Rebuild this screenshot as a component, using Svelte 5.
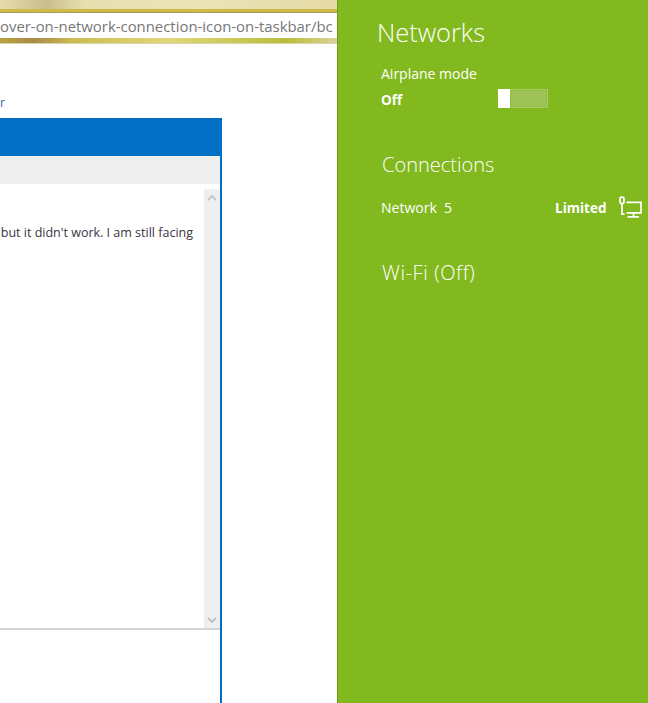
<script>
  const bodyText = "but it didn't work. I am still facing";
</script>

<div class="screen">
  <div class="browser">
    <div class="chrome-top"></div>
    <div class="address">
      <span class="url">over-on-network-connection-icon-on-taskbar/bc</span>
    </div>
    <div class="chrome-bottom"></div>
    <div class="page">
      <div class="crumb">r</div>
      <div class="dialog">
        <div class="dialog-head"></div>
        <div class="dialog-tabs"></div>
        <div class="dialog-body">
          <div class="message">
            <p>{bodyText}</p>
          </div>
          <div class="scrollbar">
            <svg width="10" height="6" viewBox="0 0 10 6"><path d="M1 5 L5 1 L9 5" fill="none" stroke="#c8c8c8" stroke-width="2" /></svg>
            <svg width="10" height="6" viewBox="0 0 10 6"><path d="M1 1 L5 5 L9 1" fill="none" stroke="#c0c0c0" stroke-width="2" /></svg>
          </div>
        </div>
        <div class="dialog-foot"></div>
      </div>
    </div>
  </div>

  <aside class="panel">
    <h1>Networks</h1>
    <div class="airplane">
      <div class="airplane-label">Airplane mode</div>
      <div class="airplane-row">
        <span class="state">Off</span>
        <div class="toggle"><div class="thumb"></div><div class="track"></div></div>
      </div>
    </div>
    <h2 class="connections">Connections</h2>
    <div class="network">
      <span class="network-name">Network&nbsp; 5</span>
      <span class="limited">Limited</span>
      <svg class="net-icon" width="24" height="23" viewBox="0 0 24 23" fill="none" stroke="#fff" stroke-width="1.7">
        <rect x="2" y="1.2" width="4" height="6.4" rx="1.8" />
        <path d="M4 7.6 V18.2 H6.5" />
        <path d="M8.5 6.4 H23 V16.8 H8.5" />
        <path d="M15.5 16.8 V20.6 M9.5 20.8 H21" />
      </svg>
    </div>
    <h2 class="wifi">Wi-Fi (Off)</h2>
  </aside>
</div>

<style>
  :global(body) {
    margin: 0;
    background: #fff;
  }

  .screen {
    display: flex;
    width: 648px;
    height: 703px;
    overflow: hidden;
    font-family: "Open Sans", "Noto Sans", sans-serif;
  }

  .browser {
    width: 337px;
    flex-shrink: 0;
    display: flex;
    flex-direction: column;
    overflow: hidden;
  }

  .chrome-top {
    height: 13px;
    box-sizing: border-box;
    background: linear-gradient(90deg, #e6dcaa 0%, #c9bd8c 14%, #e8dfb0 25%, #ebe2b8 60%, #e4dba6 100%);
    border-bottom: 1px solid #a39a64;
    box-shadow: inset 0 -3px 0 #cdbb45;
  }

  .address {
    height: 25px;
    background: #fff;
    overflow: hidden;
    white-space: nowrap;
    line-height: 26px;
  }

  .url {
    display: block;
    font-size: 14.9px;
    color: #777;
  }

  .chrome-bottom {
    height: 6px;
    background: linear-gradient(90deg, #b9a23e 0%, #a88a4a 10%, #cdbd50 22%, #e0d77a 50%, #b9bd3c 85%, #d9d49a 100%);
    border-bottom: 1px solid #d8d4ae;
    box-sizing: border-box;
  }

  .page {
    flex: 1;
    display: flex;
    flex-direction: column;
    min-height: 0;
  }

  .crumb {
    height: 74px;
    box-sizing: border-box;
    padding-top: 51px;
    font-size: 12px;
    line-height: 16px;
    color: #2462ac;
  }

  .dialog {
    width: 222px;
    flex: 1;
    box-sizing: border-box;
    border-right: 2px solid #0170c4;
    display: flex;
    flex-direction: column;
  }

  .dialog-head {
    height: 38px;
    margin-right: -2px;
    background: #0170c4;
  }

  .dialog-tabs {
    height: 28px;
    background: #eeeeee;
  }

  .dialog-body {
    height: 446px;
    box-sizing: border-box;
    display: flex;
    justify-content: flex-end;
    padding-top: 5px;
    border-bottom: 2px solid #d4d4d4;
  }

  .message {
    flex: 1;
    min-width: 0;
    overflow: hidden;
    padding-top: 35px;
  }

  .message p {
    margin: 0 11px 0 0;
    text-align: right;
    white-space: nowrap;
    font-size: 12.5px;
    line-height: 18px;
    color: #3b3344;
  }

  .scrollbar {
    width: 16px;
    background: #efefef;
    display: flex;
    flex-direction: column;
    align-items: center;
    justify-content: space-between;
    padding: 6px 0 5px;
    box-sizing: border-box;
  }

  .dialog-foot {
    flex: 1;
  }

  .panel {
    flex: 1;
    box-sizing: border-box;
    background: #82b91e;
    border-left: 1px solid #6f9b1e;
    color: #fff;
    padding: 15px 0 0 39px;
  }

  h1 {
    margin: 0;
    font-size: 25.4px;
    font-weight: 300;
    line-height: 34px;
  }

  .airplane {
    margin: 15px 0 0 4px;
  }

  .airplane-label {
    font-size: 14px;
    line-height: 19px;
  }

  .airplane-row {
    display: flex;
    align-items: center;
    margin-top: 5px;
    height: 20px;
  }

  .state {
    width: 117px;
    margin-top: 3px;
    font-size: 13.5px;
    font-weight: 700;
  }

  .toggle {
    display: flex;
    width: 50px;
    height: 19px;
    box-sizing: border-box;
    background: #a9ca68;
    padding: 1px;
  }

  .thumb {
    width: 12px;
    margin: -1px 0 -1px -1px;
    background: #fff;
  }

  .track {
    flex: 1;
    background: #9fc258;
    border: 1px solid #94bb48;
  }

  h2 {
    margin: 0;
    font-size: 20px;
    font-weight: 300;
    line-height: 28px;
  }

  .connections {
    margin: 43px 0 0 5px;
  }

  .network {
    display: flex;
    align-items: center;
    margin: 16px 0 0 4px;
    height: 24px;
  }

  .network-name {
    width: 174px;
    font-size: 14px;
    font-weight: 400;
  }

  .limited {
    width: 63px;
    margin-top: 1px;
    font-size: 13.5px;
    font-weight: 700;
  }

  .net-icon {
    flex-shrink: 0;
  }

  .wifi {
    margin: 40px 0 0 5px;
    letter-spacing: 0.6px;
  }
</style>
